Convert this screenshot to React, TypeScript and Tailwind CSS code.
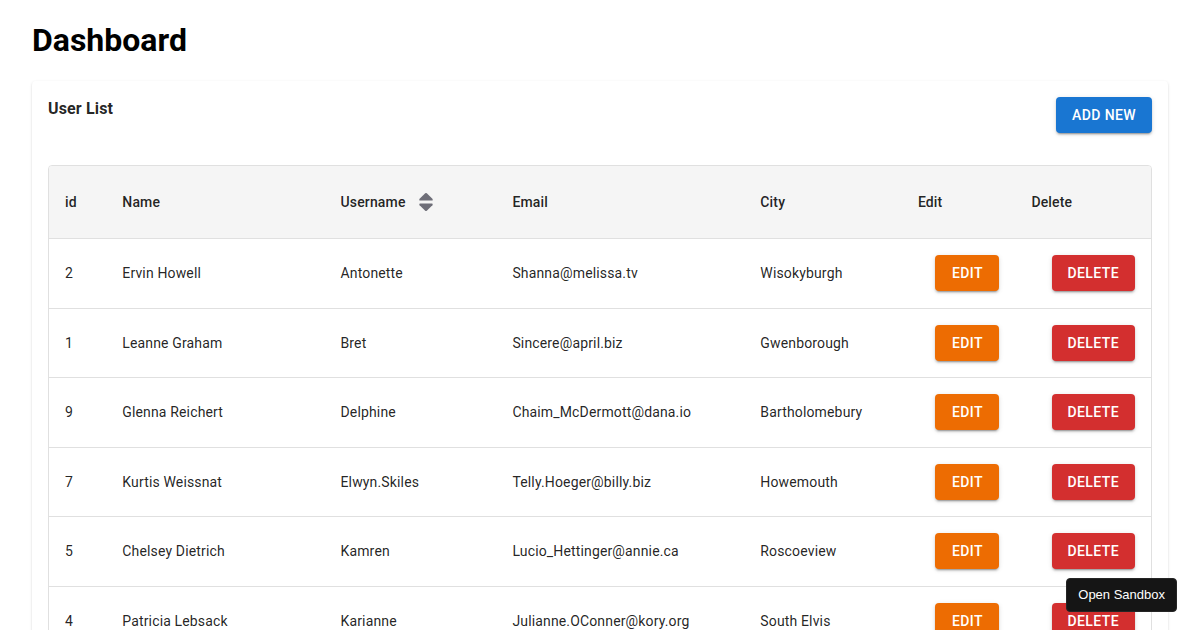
type User = {
  id: number;
  name: string;
  username: string;
  email: string;
  city: string;
};

const users: User[] = [
  { id: 2, name: "Ervin Howell", username: "Antonette", email: "Shanna@melissa.tv", city: "Wisokyburgh" },
  { id: 1, name: "Leanne Graham", username: "Bret", email: "Sincere@april.biz", city: "Gwenborough" },
  { id: 9, name: "Glenna Reichert", username: "Delphine", email: "Chaim_McDermott@dana.io", city: "Bartholomebury" },
  { id: 7, name: "Kurtis Weissnat", username: "Elwyn.Skiles", email: "Telly.Hoeger@billy.biz", city: "Howemouth" },
  { id: 5, name: "Chelsey Dietrich", username: "Kamren", email: "Lucio_Hettinger@annie.ca", city: "Roscoeview" },
  { id: 4, name: "Patricia Lebsack", username: "Karianne", email: "Julianne.OConner@kory.org", city: "South Elvis" },
];

const buttonBase =
  "min-w-16 rounded px-4 py-1.5 text-sm leading-6 font-medium tracking-[0.4px] uppercase text-white shadow-[0_3px_1px_-2px_rgba(0,0,0,0.2),0_2px_2px_0_rgba(0,0,0,0.14),0_1px_5px_0_rgba(0,0,0,0.12)]";

const SortIcon = () => (
  <svg width="14" height="20" viewBox="0 0 14 20" fill="#6e6e78" aria-hidden="true">
    <path d="M6.2 1.3Q7 .6 7.8 1.3L13.4 6.8Q14.3 8.6 12.8 8.6H1.2Q-.3 8.6.6 6.8Z" />
    <path d="M6.2 18.7Q7 19.4 7.8 18.7L13.4 13.2Q14.3 11.4 12.8 11.4H1.2Q-.3 11.4.6 13.2Z" />
  </svg>
);

const UserTable = () => (
  <div className="overflow-hidden rounded border border-[#e0e0e0]">
    <table className="w-full table-fixed text-left text-sm leading-5 tracking-[0.15px]">
      <colgroup>
        <col className="w-[5.2%]" />
        <col className="w-[19.8%]" />
        <col className="w-[15.6%]" />
        <col className="w-[22.5%]" />
        <col className="w-[14.3%]" />
        <col className="w-[10.3%]" />
        <col className="w-[12.3%]" />
      </colgroup>
      <thead className="bg-[#f5f5f5]">
        <tr className="h-[72px] border-b border-[#e0e0e0] *:px-4 *:font-medium">
          <th scope="col">id</th>
          <th scope="col">Name</th>
          <th scope="col">
            <button type="button" className="flex items-center gap-[13px] font-medium tracking-[0.15px]">
              Username
              <SortIcon />
            </button>
          </th>
          <th scope="col">Email</th>
          <th scope="col">City</th>
          <th scope="col">Edit</th>
          <th scope="col">Delete</th>
        </tr>
      </thead>
      <tbody>
        {users.map((user) => (
          <tr key={user.id} className="border-b border-[#e0e0e0] odd:h-[70px] even:h-[69px] *:px-4">
            <td>{user.id}</td>
            <td>{user.name}</td>
            <td>{user.username}</td>
            <td>{user.email}</td>
            <td>{user.city}</td>
            <td className="text-right">
              <button type="button" className={`${buttonBase} bg-[#ed6c02]`}>
                Edit
              </button>
            </td>
            <td className="text-right">
              <button type="button" className={`${buttonBase} bg-[#d32f2f]`}>
                Delete
              </button>
            </td>
          </tr>
        ))}
      </tbody>
    </table>
  </div>
);

export default function App() {
  return (
    <div className="min-h-screen bg-white px-8 py-5 font-[Roboto,sans-serif] text-black/87">
      <h1 className="text-[32px] leading-10 font-bold text-black">Dashboard</h1>
      <main className="mt-[21px] rounded p-4 shadow-[0_2px_1px_-1px_rgba(0,0,0,0.2),0_1px_1px_0_rgba(0,0,0,0.14),0_1px_3px_0_rgba(0,0,0,0.12)]">
        <div className="mb-8 flex items-start justify-between">
          <h2 className="text-base leading-6 font-bold tracking-[0.15px]">User List</h2>
          <button type="button" className={`${buttonBase} bg-[#1976d2]`}>
            Add New
          </button>
        </div>
        <UserTable />
      </main>
      <a
        href="#sandbox"
        className="fixed right-[23px] bottom-[18px] rounded border border-[#252525] bg-[#151515] px-[11px] py-1.5 font-['Liberation_Sans',sans-serif] text-[13px] leading-5 text-white"
      >
        Open Sandbox
      </a>
    </div>
  );
}
